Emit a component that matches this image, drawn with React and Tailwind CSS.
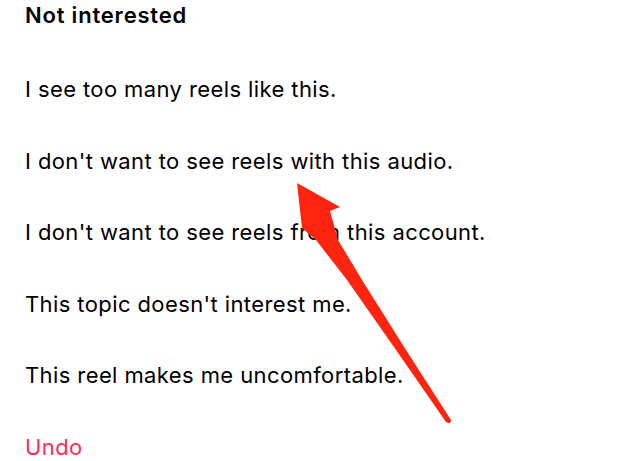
import React from "react";

const reasons = [
  "I see too many reels like this.",
  "I don't want to see reels with this audio.",
  "I don't want to see reels from this account.",
  "This topic doesn't interest me.",
  "This reel makes me uncomfortable.",
];

const App = () => {
  return (
    <div
      className="relative w-[640px] h-[461px] overflow-hidden bg-white text-black"
      style={{ fontFamily: "Inter, 'Noto Sans', sans-serif" }}
    >
      <div className="px-[25px] pt-[3px]">
        {/* Header */}
        <h1 className="text-[22px] leading-[25px] font-semibold tracking-[0.8px]">Not interested</h1>

        {/* Reasons */}
        <ul className="mt-[26px] flex flex-col">
          {reasons.map((r) => (
            <li key={r} className="text-[22px] leading-[71.5px] tracking-[0.4px]">
              {r}
            </li>
          ))}
          <li className="text-[22px] leading-[71.5px] tracking-[0.4px] text-[#ff2d55]">Undo</li>
        </ul>
      </div>

      {/* Annotation arrow */}
      <svg
        className="absolute inset-0 pointer-events-none"
        width="640"
        height="461"
        viewBox="0 0 640 461"
      >
        <path
          d="M297 183 L340 207 L330 211 L338 240 L362 280 L406 350 L451 420 Q451 425 446 422 L396 350 L347 280 L316 240 L302 228 Z"
          fill="#ff2410"
        />
      </svg>
    </div>
  );
};

export default App;
